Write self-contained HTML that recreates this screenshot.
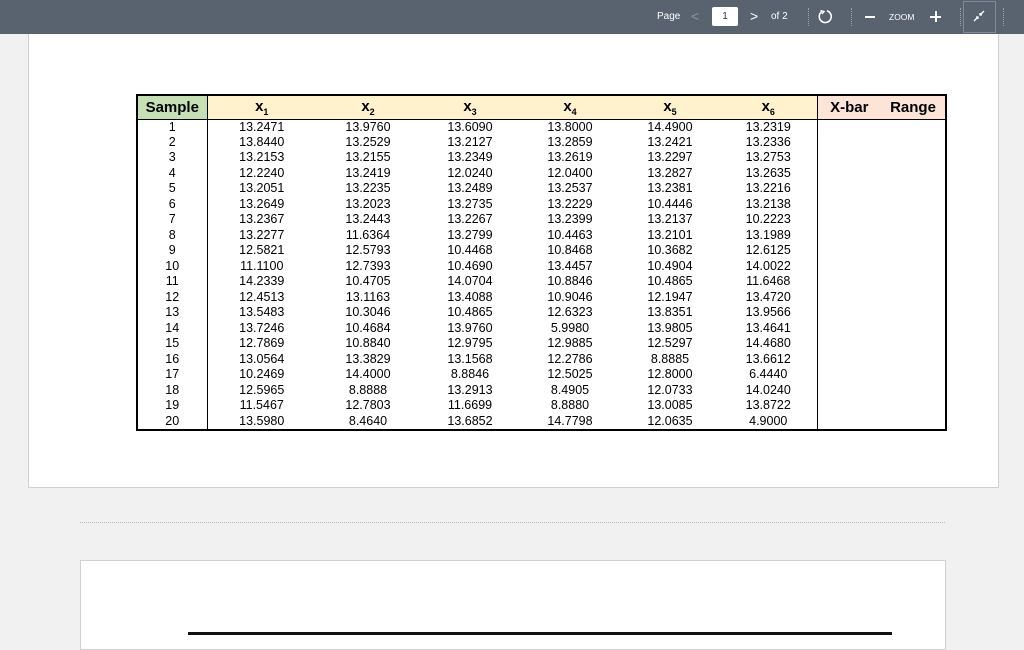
<!DOCTYPE html>
<html><head><meta charset="utf-8"><style>
*{margin:0;padding:0;box-sizing:border-box}
body{width:1024px;height:640px;background:#f1f1f1;position:relative;overflow:hidden;font-family:"Liberation Sans",Arial,sans-serif}
.tb{position:absolute;left:0;top:0;width:1024px;height:34px;background:#58636f;color:#fff}
.tb span{position:absolute;font-size:10px;top:11px}
.sep{position:absolute;top:8px;width:0;height:18px;border-left:1px dotted #9aa3ad}
.page{position:absolute;background:#fff;border:1px solid #d0d0d0}
table{position:absolute;left:136px;top:94px;width:809px;border-collapse:collapse;border:2px solid #000;font-size:12.5px;table-layout:fixed}
td{text-align:center;height:15.5px;line-height:15px;padding:0;transform-origin:center}
th{height:24px;font-size:15px;font-weight:bold;border-bottom:1.5px solid #000;padding:0}
.s{border-right:1.5px solid #000}
.xb{border-left:1.5px solid #000}
</style></head><body>
<div class="tb">
<span style="left:657px">Page</span>
<span style="left:691px;font-size:14px;top:8px;color:#8d96a0">&lt;</span>
<div style="position:absolute;left:712px;top:7px;width:26px;height:19px;background:#fff;border-radius:2px;color:#333;font-size:10px;text-align:center;line-height:19px">1</div>
<span style="left:750px;font-size:14px;top:8px">&gt;</span>
<span style="left:771px">of 2</span>
<div class="sep" style="left:808px"></div>
<svg style="position:absolute;left:818px;top:9px" width="15" height="15" viewBox="0 0 15 15"><path d="M4 2.5A6 6 0 1 0 9 1.8" fill="none" stroke="#fff" stroke-width="1.6"/><path d="M2.5 1.5L6 2.5L4 5" fill="none" stroke="#fff" stroke-width="1.4"/></svg>
<div class="sep" style="left:851px"></div>
<div style="position:absolute;left:865px;top:16px;width:10px;height:2px;background:#fff"></div>
<span style="left:889px;font-size:8.5px;top:12px">ZOOM</span>
<div style="position:absolute;left:930px;top:16px;width:11px;height:2px;background:#fff"></div>
<div style="position:absolute;left:934.5px;top:11px;width:2px;height:11px;background:#fff"></div>
<div class="sep" style="left:960px"></div>
<div style="position:absolute;left:963px;top:1px;width:33px;height:32px;border:1px solid #7d8a99"></div>
<svg style="position:absolute;left:973px;top:10px" width="12" height="12" viewBox="0 0 12 12"><path d="M1 11L5 7M3 7H5V9M11 1L7 5M7 3V5H9" stroke="#fff" stroke-width="1.3" fill="none"/></svg>
<div class="sep" style="left:1003px"></div>
</div>
<div class="page" style="left:28px;top:34px;width:971px;height:454px;border-top:none"></div>
<div style="position:absolute;left:80px;top:522px;width:865px;border-top:1px dotted #b8b8b8"></div>
<div class="page" style="left:80px;top:560px;width:866px;height:90px"></div>
<div style="position:absolute;left:188px;top:632px;width:704px;height:3px;background:#111"></div>
<table>
<colgroup><col style="width:70px"><col style="width:109px"><col style="width:104px"><col style="width:100px"><col style="width:100px"><col style="width:100px"><col style="width:97px"><col style="width:64px"><col style="width:65px"></colgroup>
<tr><th class="s" style="background:#c6e0b4">Sample</th>
<th style="background:#fff2cc">x<sub style="font-size:9px">1</sub></th><th style="background:#fff2cc">x<sub style="font-size:9px">2</sub></th><th style="background:#fff2cc">x<sub style="font-size:9px">3</sub></th><th style="background:#fff2cc">x<sub style="font-size:9px">4</sub></th><th style="background:#fff2cc">x<sub style="font-size:9px">5</sub></th><th style="background:#fff2cc">x<sub style="font-size:9px">6</sub></th>
<th class="xb" style="background:#fce4d6">X-bar</th><th style="background:#fce4d6">Range</th></tr>
<tr><td class="s">1</td><td>13.2471</td><td>13.9760</td><td>13.6090</td><td>13.8000</td><td>14.4900</td><td>13.2319</td><td class="xb"></td><td></td></tr>
<tr><td class="s">2</td><td>13.8440</td><td>13.2529</td><td>13.2127</td><td>13.2859</td><td>13.2421</td><td>13.2336</td><td class="xb"></td><td></td></tr>
<tr><td class="s">3</td><td>13.2153</td><td>13.2155</td><td>13.2349</td><td>13.2619</td><td>13.2297</td><td>13.2753</td><td class="xb"></td><td></td></tr>
<tr><td class="s">4</td><td>12.2240</td><td>13.2419</td><td>12.0240</td><td>12.0400</td><td>13.2827</td><td>13.2635</td><td class="xb"></td><td></td></tr>
<tr><td class="s">5</td><td>13.2051</td><td>13.2235</td><td>13.2489</td><td>13.2537</td><td>13.2381</td><td>13.2216</td><td class="xb"></td><td></td></tr>
<tr><td class="s">6</td><td>13.2649</td><td>13.2023</td><td>13.2735</td><td>13.2229</td><td>10.4446</td><td>13.2138</td><td class="xb"></td><td></td></tr>
<tr><td class="s">7</td><td>13.2367</td><td>13.2443</td><td>13.2267</td><td>13.2399</td><td>13.2137</td><td>10.2223</td><td class="xb"></td><td></td></tr>
<tr><td class="s">8</td><td>13.2277</td><td>11.6364</td><td>13.2799</td><td>10.4463</td><td>13.2101</td><td>13.1989</td><td class="xb"></td><td></td></tr>
<tr><td class="s">9</td><td>12.5821</td><td>12.5793</td><td>10.4468</td><td>10.8468</td><td>10.3682</td><td>12.6125</td><td class="xb"></td><td></td></tr>
<tr><td class="s">10</td><td>11.1100</td><td>12.7393</td><td>10.4690</td><td>13.4457</td><td>10.4904</td><td>14.0022</td><td class="xb"></td><td></td></tr>
<tr><td class="s">11</td><td>14.2339</td><td>10.4705</td><td>14.0704</td><td>10.8846</td><td>10.4865</td><td>11.6468</td><td class="xb"></td><td></td></tr>
<tr><td class="s">12</td><td>12.4513</td><td>13.1163</td><td>13.4088</td><td>10.9046</td><td>12.1947</td><td>13.4720</td><td class="xb"></td><td></td></tr>
<tr><td class="s">13</td><td>13.5483</td><td>10.3046</td><td>10.4865</td><td>12.6323</td><td>13.8351</td><td>13.9566</td><td class="xb"></td><td></td></tr>
<tr><td class="s">14</td><td>13.7246</td><td>10.4684</td><td>13.9760</td><td>5.9980</td><td>13.9805</td><td>13.4641</td><td class="xb"></td><td></td></tr>
<tr><td class="s">15</td><td>12.7869</td><td>10.8840</td><td>12.9795</td><td>12.9885</td><td>12.5297</td><td>14.4680</td><td class="xb"></td><td></td></tr>
<tr><td class="s">16</td><td>13.0564</td><td>13.3829</td><td>13.1568</td><td>12.2786</td><td>8.8885</td><td>13.6612</td><td class="xb"></td><td></td></tr>
<tr><td class="s">17</td><td>10.2469</td><td>14.4000</td><td>8.8846</td><td>12.5025</td><td>12.8000</td><td>6.4440</td><td class="xb"></td><td></td></tr>
<tr><td class="s">18</td><td>12.5965</td><td>8.8888</td><td>13.2913</td><td>8.4905</td><td>12.0733</td><td>14.0240</td><td class="xb"></td><td></td></tr>
<tr><td class="s">19</td><td>11.5467</td><td>12.7803</td><td>11.6699</td><td>8.8880</td><td>13.0085</td><td>13.8722</td><td class="xb"></td><td></td></tr>
<tr><td class="s">20</td><td>13.5980</td><td>8.4640</td><td>13.6852</td><td>14.7798</td><td>12.0635</td><td>4.9000</td><td class="xb"></td><td></td></tr>
</table>
</body></html>
